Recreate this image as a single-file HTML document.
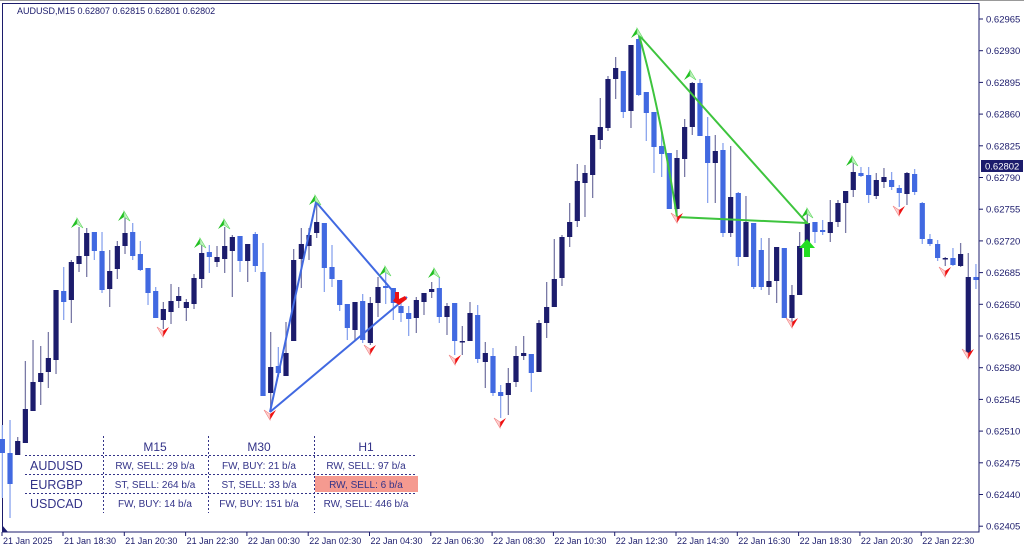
<!DOCTYPE html>
<html><head><meta charset="utf-8"><style>
html,body{margin:0;padding:0;background:#fff;width:1024px;height:552px;overflow:hidden}
svg{display:block}
text{font-family:"Liberation Sans",sans-serif}
</style></head><body>
<svg id="s" width="1024" height="552" xmlns="http://www.w3.org/2000/svg">
<rect width="1024" height="552" fill="#fff"/>
<line x1="0" y1="0.5" x2="1024" y2="0.5" stroke="#999"/>
<rect x="2.5" y="3.5" width="976.5" height="528.5" fill="none" stroke="#1c1c6c"/>
<text x="17" y="14" font-size="9" fill="#1c1c6c">AUDUSD,M15  0.62807 0.62815 0.62801 0.62802</text>
<g id="g"></g>
</svg>
<script>
var D=[
[-2,'d',439,453,425,498],[-1,'d',453,484,420,518],[0,'u',441,455,437,455],[1,'u',409,443,361,443],[2,'u',382,411,340,411],[3,'u',373,382,346,405],[4,'u',358,372,332,388],[5,'u',290,360,290,374],[6,'d',291,302,267,320],[7,'u',262,300,260,323],[8,'u',256,264,227,272],[9,'u',233,256,228,277],[10,'d',232,251,232,260],[11,'d',251,290,232,293],[12,'u',271,289,250,307],[13,'u',246,269,241,279],[14,'u',233,246,218,254],[15,'d',232,256,223,260],[16,'d',254,270,241,271],[17,'d',268,293,268,305],[18,'d',291,318,287,318],[19,'u',309,320,302,329],[20,'u',301,312,284,324],[21,'u',296,301,287,308],[22,'u',302,308,299,321],[23,'u',278,304,274,309],[24,'u',253,279,245,288],[25,'d',252,257,245,273],[26,'u',257,262,246,267],[27,'u',246,259,227,273],[28,'u',237,251,235,297],[29,'d',236,261,236,272],[30,'u',244,261,244,282],[31,'d',234,266,232,272],[32,'d',272,396,243,396],[33,'u',367,393,332,408],[34,'d',366,373,347,377],[35,'u',353,376,322,376],[36,'u',260,341,249,341],[37,'u',244,259,228,288],[38,'u',235,246,228,260],[39,'u',222,233,202,238],[40,'d',223,268,223,292],[41,'d',267,279,245,287],[42,'d',280,305,280,311],[43,'d',304,328,304,340],[44,'u',302,330,302,340],[45,'d',301,340,294,343],[46,'u',303,343,297,345],[47,'u',287,303,277,317],[48,'d',286,288,273,304],[49,'d',288,303,288,320],[50,'d',306,313,298,322],[51,'d',313,319,306,336],[52,'u',300,318,297,333],[53,'u',293,302,293,315],[54,'u',289,292,282,298],[55,'d',288,317,277,323],[56,'u',306,317,303,335],[57,'d',303,341,303,355],[58,'u',341,342,326,355],[59,'u',313,341,302,341],[60,'d',315,359,305,363],[61,'u',353,362,342,388],[62,'d',356,393,348,396],[63,'d',392,396,385,418],[64,'u',383,395,368,415],[65,'u',356,382,346,387],[66,'u',353,356,336,360],[67,'d',354,373,354,392],[68,'u',323,372,320,372],[69,'u',307,323,282,338],[70,'u',279,307,239,307],[71,'u',237,278,235,286],[72,'u',222,237,203,247],[73,'u',181,221,164,227],[74,'u',173,183,165,217],[75,'u',135,175,135,198],[76,'u',127,140,98,149],[77,'u',79,128,76,131],[78,'u',68,79,57,99],[79,'d',71,112,71,118],[80,'u',45,111,45,128],[81,'d',39,95,35,96],[82,'d',92,113,92,141],[83,'d',112,147,112,173],[84,'d',146,154,132,177],[85,'d',153,209,153,209],[86,'u',158,209,150,217],[87,'u',127,159,119,177],[88,'u',83,127,82,135],[89,'d',83,136,79,136],[90,'d',136,163,117,203],[91,'u',151,163,135,203],[92,'d',150,233,143,237],[93,'u',197,233,146,237],[94,'d',193,257,192,266],[95,'u',222,257,196,257],[96,'d',223,287,223,289],[97,'d',250,287,238,290],[98,'u',281,287,238,295],[99,'u',247,281,247,303],[100,'d',248,318,248,318],[101,'u',295,318,285,326],[102,'u',246,295,232,295],[103,'u',223,245,213,253],[104,'d',222,232,222,243],[105,'d',230,232,220,235],[106,'u',222,233,200,242],[107,'u',203,222,200,227],[108,'u',191,203,191,233],[109,'u',172,190,162,197],[110,'d',173,176,167,177],[111,'d',175,195,167,203],[112,'u',180,196,173,199],[113,'u',177,182,168,188],[114,'d',180,187,172,190],[115,'d',188,193,185,207],[116,'u',173,194,172,205],[117,'d',174,192,169,195],[118,'d',203,239,202,244],[119,'d',239,244,234,246],[120,'d',244,258,240,261],[121,'u',258,259,257,266],[122,'d',258,265,248,266],[123,'u',254,266,243,267],[124,'u',277,353,253,353],[125,'d',277,280,264,289]];
var h='';
D.forEach(function(c){var x=17.7+7.666*c[0];var col=c[1]=='u'?'#1c1c6c':'#4169e1';var wc=c[1]=='u'?'#7a7aa6':'#8aa4ee';
h+='<line x1="'+x+'" y1="'+c[4]+'" x2="'+x+'" y2="'+c[5]+'" stroke="'+wc+'" stroke-width="1.3"/>';
var hh=Math.max(c[3]-c[2],1.5);h+='<rect x="'+(x-2.6)+'" y="'+c[2]+'" width="5.2" height="'+hh+'" fill="'+col+'"/>';});
h+='<polyline points="270,412 316,202 398,297" fill="none" stroke="#4169e1" stroke-width="2"/>';
h+='<line x1="270" y1="412" x2="407" y2="297" stroke="#4169e1" stroke-width="2"/>';
h+='<path d="M639,35 Q660,110 677,217 L807,223 L639,35" fill="none" stroke="#3ec43e" stroke-width="2"/>';
var ups=[[77,218],[124,211],[200,238],[224,219],[315,195],[385,266],[434,268],[637,28],[690,70],[807,208],[852,156]];
ups.forEach(function(p){var x=p[0],y=p[1];h+='<path d="M'+x+','+y+' L'+(x-6)+','+(y+10)+' L'+x+','+(y+6)+' Z" fill="#22c022"/><path d="M'+x+','+y+' L'+(x+6)+','+(y+10)+' L'+x+','+(y+6)+' Z" fill="#bff0bf" stroke="#5fd85f" stroke-width="0.6"/>';});
var dn=[[163,337],[270,420],[370,355],[455,365],[500,428],[677,223],[792,328],[899,216],[945,277],[968,359]];
dn.forEach(function(p){var x=p[0],y=p[1];h+='<path d="M'+x+','+y+' L'+(x+6)+','+(y-10)+' L'+x+','+(y-6)+' Z" fill="#ee1111"/><path d="M'+x+','+y+' L'+(x-6)+','+(y-10)+' L'+x+','+(y-6)+' Z" fill="#ffd0d0" stroke="#f08080" stroke-width="0.6"/>';});
h+='<path d="M395,292 L399,292 L399,299 L405,296 L407,299 L399,305 L393,301 L395,298 Z" fill="#ee1111"/>';
h+='<path d="M807,239 L799,248 L804,248 L804,257 L810,257 L810,248 L815,248 Z" fill="#22dd22"/>';
var pr=['0.62965','0.62930','0.62895','0.62860','0.62825','0.62790','0.62755','0.62720','0.62685','0.62650','0.62615','0.62580','0.62545','0.62510','0.62475','0.62440','0.62405'];
pr.forEach(function(p,i){var y=19+31.7*i;h+='<line x1="979" y1="'+y+'" x2="983" y2="'+y+'" stroke="#1c1c6c"/><text x="986" y="'+(y+3.5)+'" font-size="9.5" fill="#1c1c6c">'+p+'</text>';});
h+='<rect x="981" y="160" width="42" height="12" fill="#1c1c6c"/><text x="985" y="169.5" font-size="9.5" fill="#fff">0.62802</text>';
var tl=['21 Jan 2025','21 Jan 18:30','21 Jan 20:30','21 Jan 22:30','22 Jan 00:30','22 Jan 02:30','22 Jan 04:30','22 Jan 06:30','22 Jan 08:30','22 Jan 10:30','22 Jan 12:30','22 Jan 14:30','22 Jan 16:30','22 Jan 18:30','22 Jan 20:30','22 Jan 22:30'];
tl.forEach(function(t,i){var x=i==0?2:63+61.3*(i-1);h+='<line x1="'+x+'" y1="532" x2="'+x+'" y2="536" stroke="#1c1c6c"/><text x="'+(x+1)+'" y="544" font-size="9" fill="#1c1c6c">'+t+'</text>';});
h+='<path d="M2,525 L8,532 L2,532 Z" fill="#1c1c6c"/>';
var dc='stroke="#333388" stroke-width="1" stroke-dasharray="2,2"';
[455,474,493].forEach(function(y){h+='<line x1="25" y1="'+y+'.5" x2="417" y2="'+y+'.5" '+dc+'/>';});
[103,208,314].forEach(function(x){h+='<line x1="'+x+'.5" y1="436" x2="'+x+'.5" y2="513" '+dc+'/>';});
h+='<rect x="315" y="476" width="103" height="16" fill="#f59a90"/>';
[['M15',155],['M30',259],['H1',366]].forEach(function(a){h+='<text x="'+a[1]+'" y="451" font-size="12" fill="#333388" text-anchor="middle">'+a[0]+'</text>';});
var rows=[['AUDUSD','RW, SELL: 29 b/a','FW, BUY: 21 b/a','RW, SELL: 97 b/a'],['EURGBP','ST, SELL: 264 b/a','ST, SELL: 33 b/a','RW, SELL: 6 b/a'],['USDCAD','FW, BUY: 14 b/a','FW, BUY: 151 b/a','RW, SELL: 446 b/a']];
rows.forEach(function(r,i){var y=470+19*i;h+='<text x="30" y="'+y+'" font-size="12.5" fill="#333388">'+r[0]+'</text>';
[155,259,366].forEach(function(x,j){h+='<text x="'+x+'" y="'+(y-1)+'" font-size="10" fill="#333388" text-anchor="middle">'+r[j+1]+'</text>';});});
document.getElementById('g').innerHTML=h;
</script>
</body></html>
